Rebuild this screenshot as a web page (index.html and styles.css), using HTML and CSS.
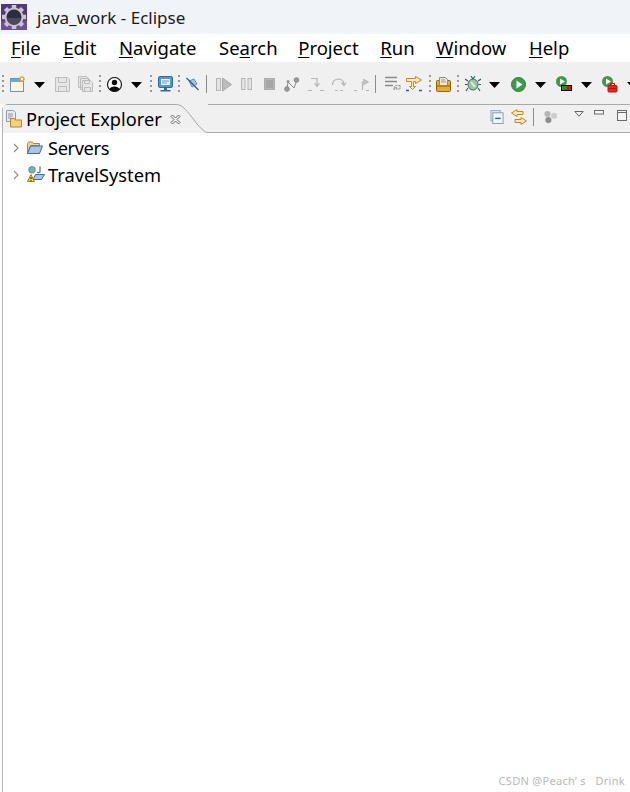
FILE: index.html
```html
<!DOCTYPE html>
<html lang="en">
<head>
<meta charset="utf-8">
<title>java_work - Eclipse</title>
<link rel="stylesheet" href="styles.css">
</head>
<body>
<div class="app">
  <header class="titlebar">
    <svg class="app-logo" width="26" height="26" viewBox="0 0 26 26">
      <rect width="26" height="26" fill="#4f3a80"/>
      <rect y="17" width="26" height="9" fill="#6b4f9a"/>
      <g stroke="#c9c6d2" stroke-width="4.5"><path d="M13 1v24M1 13h24M4.5 4.5l17 17M21.5 4.5l-17 17"/></g>
      <circle cx="13" cy="13" r="9.5" fill="#c4c2cc"/>
      <circle cx="13" cy="13" r="7.5" fill="#2c2c3c"/>
      <path d="M6 14a7 7 0 0 0 14 0z" fill="#4b4860"/>
    </svg>
    <span class="title-text">java_work - Eclipse</span>
  </header>
  <nav class="menubar">
    <span class="menu-item"><u>F</u>ile</span>
    <span class="menu-item"><u>E</u>dit</span>
    <span class="menu-item"><u>N</u>avigate</span>
    <span class="menu-item menu-tight2">Se<u>a</u>rch</span>
    <span class="menu-item menu-tight1"><u>P</u>roject</span>
    <span class="menu-item menu-tight1"><u>R</u>un</span>
    <span class="menu-item"><u>W</u>indow</span>
    <span class="menu-item"><u>H</u>elp</span>
  </nav>
  <div class="toolbar">
    <i class="grip"></i>
    <svg class="g6" width="16" height="16" viewBox="0 0 16 16"><rect x=".5" y="2.5" width="13" height="13" fill="#fdf6dc" stroke="#6f93b5"/><rect x="1" y="3" width="12" height="3" fill="#6ea5d8"/><path d="M12 0v6M9 3h6M10 1l4 4M14 1l-4 4" stroke="#e0a52c" stroke-width="1.4"/><circle cx="12" cy="3" r="1.2" fill="#fff"/></svg>
    <i class="caret g8"></i>
    <svg class="g10" width="15" height="15" viewBox="0 0 15 15" fill="none" stroke="#bcbcbc"><path d="M.5.5h12l2 2v12H.5z" fill="#e6e6e6"/><path d="M3.5.5v5h8v-5M3.5 14.5v-5h8v5"/></svg>
    <svg class="g8" width="15" height="16" viewBox="0 0 15 16" fill="none" stroke="#bcbcbc"><path d="M.5.5h8l2 2v9H.5zM2.5 2.5h8l2 2v9h-10z" fill="#e6e6e6"/><path d="M4.5 4.5h8l2 2v9h-10z" fill="#e6e6e6"/><path d="M6.5 15.5v-4h6v4M6.5 4.5v3h5v-3"/></svg>
    <i class="grip g6"></i>
    <svg class="g6" width="15" height="15" viewBox="0 0 15 15"><circle cx="7.5" cy="7.5" r="7" fill="#fff" stroke="#222" stroke-width="1.2"/><circle cx="7.5" cy="5.5" r="2.7" fill="#111"/><path d="M2.5 12.5c.5-4 9.500-4 10 0a7 7 0 0 1-10 0z" fill="#111"/></svg>
    <i class="caret g9"></i>
    <i class="grip g8"></i>
    <svg class="g6" width="15" height="16" viewBox="0 0 15 16"><rect x=".5" y=".5" width="14" height="11" rx="1.500" fill="#5b94c8" stroke="#2b6ca6"/><rect x="3" y="3" width="9" height="6" fill="#eaf3fa"/><path d="M4 5h7M4 7h5" stroke="#5b94c8"/><path d="M6 12h3v2H6zM2.500 14h10v1.500h-10z" fill="#2b6ca6"/></svg>
    <i class="grip g5"></i>
    <svg class="g6" width="13" height="14" viewBox="0 0 13 14"><path d="M3 4l5-2 3 5-5 3z" fill="#a9c4de" stroke="#6d8fb2"/><path d="M.5 1L12.500 13" stroke="#2b5c98" stroke-width="1.300"/></svg>
    <i class="sep g7"></i>
    <svg class="g9" width="16" height="15" viewBox="0 0 16 15"><rect x=".5" y="1.500" width="4" height="12" fill="#e4e4e4" stroke="#b5b5b5"/><path d="M6.500 1v13L15.500 7.500z" fill="#bdbdbd" stroke="#a8a8a8"/></svg>
    <svg class="g9" width="11" height="12" viewBox="0 0 11 12" fill="#e4e4e4" stroke="#b5b5b5"><rect x=".5" y=".5" width="3.500" height="11"/><rect x="7" y=".5" width="3.500" height="11"/></svg>
    <svg class="g12" width="11" height="12" viewBox="0 0 11 12"><rect x=".5" y=".5" width="10" height="11" fill="#b8b8b8" stroke="#aaa"/><rect x="2" y="2" width="7" height="8" fill="#a6a6a6"/></svg>
    <svg class="g9" width="16" height="15" viewBox="0 0 16 15" fill="#9a9a9a" stroke="#8a8a8a"><path d="M3 12L4 5M4 5l6 6M10 11l3-8" fill="none"/><circle cx="3" cy="12" r="2.300"/><circle cx="12.500" cy="3" r="2.300"/><circle cx="4" cy="4.500" r="1"/></svg>
    <svg class="g8" width="16" height="15" viewBox="0 0 16 15" fill="none" stroke="#b5b5b5" stroke-width="1.200"><path d="M3 1.500h6v7M6.500 6L9 9.500 11.500 6"/><path d="M0 13.500h4M12 13.500h4"/></svg>
    <svg class="g7" width="16" height="15" viewBox="0 0 16 15" fill="none" stroke="#b5b5b5" stroke-width="1.200"><path d="M1.500 8C1.500 1 12 0 13 7"/><path d="M10.500 5.500L13 8.500l2-3"/><path d="M4 13.500h3M9 13.500h3"/></svg>
    <svg class="g7" width="16" height="15" viewBox="0 0 16 15" fill="none" stroke="#b5b5b5" stroke-width="1.200"><path d="M8.500 13V5h4M10 2.500L14 5l-4 2.500z"/><path d="M0 13.500h3M12 13.500h3"/></svg>
    <i class="sep g5"></i>
    <svg class="g9" width="16" height="16" viewBox="0 0 16 16" fill="none"><path d="M0 1.500h12M0 5.500h12M0 9.500h8" stroke="#8a8a8a" stroke-width="1.500"/><path d="M9 12a3 3 0 0 1 5-2l1-1v4h-4l1-1-1-1a1.500 1.500 0 0 0-1 2l-1 1a3 3 0 0 1 0-2z" fill="#eee" stroke="#8f8f8f" stroke-width=".8"/></svg>
    <svg class="g5" width="18" height="16" viewBox="0 0 18 16" fill="none"><path d="M.5 2.500h9v-2l6 3.500-6 3.500v-2h-2v5h2l-3 3-3-3h2v-5h-5z" fill="#fbeab6" stroke="#c08a1c"/><path d="M0 14.500h3M13 14.500h3" stroke="#2e5e96" stroke-width="1.500"/></svg>
    <i class="grip g5"></i>
    <svg class="g5" width="15" height="15" viewBox="0 0 15 15"><rect x=".5" y="3.500" width="14" height="11" rx="1" fill="#e3ac2d" stroke="#8e6410"/><path d="M3.500.5h6l2 2v6h-8z" fill="#e8e8e8" stroke="#8a8a8a"/><path d="M5 3h4M5 5h5" stroke="#999"/><rect x="1" y="8" width="13" height="2" fill="#b98414"/></svg>
    <i class="grip g6"></i>
    <svg class="g6" width="16" height="16" viewBox="0 0 16 16"><path d="M8 3L6 0M8 3l2-3M3 5L0 3M13 5l3-2M2.500 8.500H0M13.500 8.500H16M3 12l-2 3M13 12l2 3" stroke="#2b5a5a" stroke-width="1.100"/><ellipse cx="8" cy="8.500" rx="5" ry="5.500" fill="#9cc4a8" stroke="#3d6d6d"/><path d="M6 6l4 5" stroke="#dff0e2" stroke-width="2"/></svg>
    <i class="caret g8"></i>
    <svg class="g11" width="15" height="15" viewBox="0 0 15 15"><circle cx="7.500" cy="7.500" r="7" fill="#3f9a4a" stroke="#2a7d3c"/><path d="M5.500 3.500v8l6-4z" fill="#fff"/></svg>
    <i class="caret g9"></i>
    <span class="run-icon g10">
      <svg width="16" height="16" viewBox="0 0 16 16"><circle cx="5.500" cy="5.500" r="5.500" fill="#3f9a4a"/><path d="M4 2.500v6l5-3z" fill="#fff"/><rect x="5.500" y="9.500" width="10" height="5" fill="#d01818" stroke="#000"/><rect x="6" y="10" width="4.500" height="4" fill="#0da018"/></svg>
    </span>
    <i class="caret g9"></i>
    <span class="run-icon g10">
      <svg width="16" height="17" viewBox="0 0 16 17"><circle cx="5.500" cy="5.500" r="5.500" fill="#3f9a4a"/><path d="M4 2.500v6l5-3z" fill="#fff"/><rect x="6" y="9.500" width="9" height="6.500" rx="1" fill="#ee2020" stroke="#c01010"/><path d="M8.500 9.500v-2h4v2M6 12.500h9" stroke="#c01010" fill="none"/></svg>
    </span>
    <i class="caret g9"></i>
  </div>
  <section class="view">
    <div class="tabbar">
      <div class="tab">
        <svg class="tab-icon" width="18" height="18" viewBox="0 0 18 18"><path d="M1.500.5h7l2 2v9h-9z" fill="#e6ecf4" stroke="#8d9bb0"/><path d="M3 4h5M3 6h5M3 8h3" stroke="#9b86b8"/><path d="M5.500 8.500h4l1 1.500h6v7h-11z" fill="#f4cf7c" stroke="#b48728"/></svg>
        <span class="tab-label">Project Explorer</span>
        <svg class="tab-close" width="11" height="11" viewBox="0 0 11 11" fill="#f4f4f4" stroke="#666"><path d="M1 2.500L2.500 1 5.500 4 8.500 1 10 2.500 7 5.500 10 8.500 8.500 10 5.500 7 2.500 10 1 8.500 4 5.500z"/></svg>
        <svg class="tab-curve" width="33" height="29" viewBox="0 0 33 29" fill="none"><path d="M0 .5h1c5 0 8 3 13 9s9 13 14 16.500c2 1.500 3 2.500 5 2.500" stroke="#a8a8a8"/></svg>
      </div>
      <div class="view-actions">
        <svg width="14" height="14" viewBox="0 0 14 15"><rect x=".5" y=".5" width="10" height="11" fill="#d8e2ee" stroke="#8faac6"/><rect x="2.500" y="3" width="11" height="11.500" fill="#f2f6fb" stroke="#7f9cbd"/><path d="M5 9h6" stroke="#2b62a0" stroke-width="1.500"/></svg>
        <svg class="a7" width="16" height="16" viewBox="0 0 16 16" fill="#fbeab6" stroke="#bd8822"><path d="M6 .5L.5 4 6 7.500V5.500h6V2.500H6z"/><path d="M10 8.500l5.500 3.500-5.500 3.500v-2H4v-3h6z"/></svg>
        <i class="sep a6"></i>
        <svg class="a10" width="14" height="14" viewBox="0 0 16 15" fill="#b4b4b4"><circle cx="4" cy="4" r="3.500"/><circle cx="11.500" cy="6" r="3.500" fill="#cdcdcd"/><circle cx="5" cy="11" r="3.500" fill="#8c8c8c"/></svg>
        <svg class="a-menu" width="10" height="6" viewBox="0 0 10 6"><path d="M.8.500h8.400L5 5.200z" fill="#f4f4f4" stroke="#666"/></svg>
        <svg class="a-min" width="10" height="5" viewBox="0 0 10 5"><rect x=".5" y=".5" width="9" height="3.500" fill="#f4f4f4" stroke="#6a6a6a"/></svg>
        <svg class="a-max" width="10" height="11" viewBox="0 0 10 11"><rect x=".5" y=".5" width="9" height="10" fill="#f4f4f4" stroke="#6a6a6a"/><path d="M1 2.500h8" stroke="#6a6a6a"/></svg>
      </div>
    </div>
    <div class="tree">
      <div class="tree-row">
        <svg class="twisty" width="6" height="10" viewBox="0 0 6 10"><path d="M1 1l4 4-4 4" fill="none" stroke="#8c8c8c" stroke-width="1.100"/></svg>
        <svg class="node-icon" width="16" height="14" viewBox="0 0 16 14"><path d="M.5 12.500v-10l1-1.500h4l1 1.500h6v2H3.500z" fill="#f4d58c" stroke="#9a8a5a"/><path d="M.5 12.500l3-7.500h12l-3 7.500z" fill="#a9c6ea" stroke="#3c6ba4"/></svg>
        <span class="node-label node-label-servers">Servers</span>
      </div>
      <div class="tree-row">
        <svg class="twisty" width="6" height="10" viewBox="0 0 6 10"><path d="M1 1l4 4-4 4" fill="none" stroke="#8c8c8c" stroke-width="1.100"/></svg>
        <svg class="node-icon" width="18" height="17" viewBox="0 0 18 17"><circle cx="5" cy="3.800" r="3.300" fill="#6fb0e0" stroke="#5f7f78" stroke-width=".8"/><path d="M3.500 2l2.500-1 .5 2-2 2z" fill="#8fb860"/><path d="M13 .5v5c0 1.500-2.200 1.500-2.800.5" fill="none" stroke="#3c6ba4" stroke-width="1.200"/><path d="M6 13.500l2.500-5h9l-3 5z" fill="#a9c6ea" stroke="#3c6ba4"/><path d="M4 8.500L.5 15.500h7z" fill="#f7d23e" stroke="#a68410"/><path d="M4 11v2M4 14v1" stroke="#222"/></svg>
        <span class="node-label node-label-tight">TravelSystem</span>
      </div>
    </div>
    <div class="watermark">CSDN @Peach’ s&nbsp;&nbsp; Drink</div>
  </section>
</div>
</body>
</html>
```
FILE: styles.css
```css
* { box-sizing: border-box; }
html, body { margin: 0; padding: 0; height: 100%; overflow: hidden; background: #fff; }
body { font-family: "Noto Sans", "Open Sans", "Liberation Sans", sans-serif; color: #111; }
svg, i { display: block; flex: none; }

.app { width: 630px; height: 792px; display: flex; flex-direction: column; }

.titlebar { height: 34px; flex: none; background: #f0f4f9; display: flex; align-items: center; padding-left: 1px; }
.title-text { margin-left: 10px; font-size: 17px; color: #1a1a1a; }

.menubar { height: 28px; flex: none; background: #fff; display: flex; align-items: center; padding-left: 11px; padding-bottom: 2px; gap: 22.6px; font-size: 18.5px; color: #000; }
.menu-item u { text-underline-offset: 2px; }
.menu-tight1 { margin-right: -1px; }
.menu-tight2 { margin-right: -2px; }

.toolbar { height: 42px; flex: none; background: #f0f0f0; display: flex; align-items: center; padding-left: 2px; padding-top: 2px; overflow: hidden; }
.grip { width: 2px; height: 19px; background: repeating-linear-gradient(#9a9a8c 0 2px, transparent 2px 5px); }
.caret { width: 11px; height: 6px; background: #000; clip-path: polygon(0 0, 100% 0, 50% 100%); margin-top: 2px; }
.sep { width: 1px; height: 18px; background: #8c8c8c; }
.run-icon { display: block; flex: none; }

.g5 { margin-left: 5px; }
.g6 { margin-left: 6px; }
.g7 { margin-left: 7px; }
.g8 { margin-left: 8px; }
.g9 { margin-left: 9px; }
.g10 { margin-left: 10px; }
.g11 { margin-left: 11px; }
.g12 { margin-left: 12px; }

.view { flex: 1; position: relative; display: flex; flex-direction: column; min-height: 0; padding-left: 2px; }
.tabbar { height: 29px; flex: none; display: flex; align-items: center; position: relative; background: #f0f0f0; border-top: 1px solid #a8a8a8; border-bottom: 1px solid #a8a8a8; border-left: 1px solid #b4b4b4; border-top-left-radius: 6px; }
.tab { display: flex; align-items: center; padding-left: 2px; width: 172px; height: calc(100% + 1px); margin-bottom: -1px; position: relative; background: #f0f0f0; z-index: 1; white-space: nowrap; }
.tab-label { margin-left: 3px; font-size: 18.2px; color: #000; flex: none; }
.tab-close { margin-left: 8px; position: relative; z-index: 1; }
.tab-curve { position: absolute; left: 172px; top: -1px; background: #f0f0f0; }
.view-actions { margin-left: auto; display: flex; align-items: center; padding-right: 3px; margin-top: -4px; }
.a6 { margin-left: 6px; }
.a7 { margin-left: 7px; }
.a10 { margin-left: 10px; }
.a-menu { margin-left: 16px; margin-top: -5px; }
.a-min { margin-left: 10px; margin-top: -8px; }
.a-max { margin-left: 13px; margin-top: -2px; }
.view-actions .sep { height: 18px; }

.tree { flex: 1; background: #fff; border-left: 1px solid #b4b4b4; padding-top: 1px; }
.tree-row { height: 27px; display: flex; align-items: center; padding-left: 10px; }
.node-icon { margin-left: 8px; }
.node-label { margin-left: 5px; font-size: 18.3px; color: #000; }
.node-label-servers { letter-spacing: -.4px; }
.node-label-tight { margin-left: 3px; }

.watermark { position: absolute; right: 5px; bottom: 4px; font-size: 11px; color: #b8b8b8; letter-spacing: .3px; }
```
